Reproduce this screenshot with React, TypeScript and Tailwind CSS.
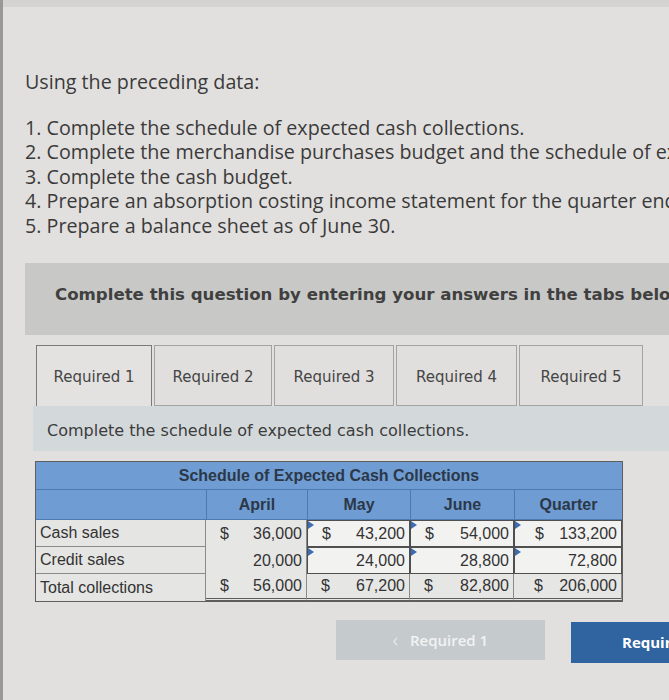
import React from "react";

type Amount = { sign: string; value: string; input?: boolean };

const rows: { label: string; total?: boolean; cells: Amount[] }[] = [
  {
    label: "Cash sales",
    cells: [
      { sign: "$", value: "36,000" },
      { sign: "$", value: "43,200", input: true },
      { sign: "$", value: "54,000", input: true },
      { sign: "$", value: "133,200", input: true },
    ],
  },
  {
    label: "Credit sales",
    cells: [
      { sign: "", value: "20,000" },
      { sign: "", value: "24,000", input: true },
      { sign: "", value: "28,800", input: true },
      { sign: "", value: "72,800", input: true },
    ],
  },
  {
    label: "Total collections",
    total: true,
    cells: [
      { sign: "$", value: "56,000" },
      { sign: "$", value: "67,200" },
      { sign: "$", value: "82,800" },
      { sign: "$", value: "206,000" },
    ],
  },
];

const colWidths = ["w-[101px]", "w-[103px]", "w-[104px]", "w-[108px]"];
const months = ["April", "May", "June", "Quarter"];

const tabs = [
  { name: "Required 1", w: "w-[116px]" },
  { name: "Required 2", w: "w-[118px]" },
  { name: "Required 3", w: "w-[120px]" },
  { name: "Required 4", w: "w-[121px]" },
  { name: "Required 5", w: "w-[124px]" },
];

function AmountCell({ cell, width, quarter, total }: { cell: Amount; width: string; quarter: boolean; total?: boolean }) {
  return (
    <div
      className={`relative box-border flex h-full ${width} items-center justify-between pr-[4px] ${
        quarter ? "pl-[20px]" : "pl-[14px]"
      } ${
        cell.input
          ? "border border-[#4f4f4f] bg-[#f2f2f1]"
          : "border-r border-[#8a8a8a] bg-[#e6e6e5]"
      } ${total ? "border-b-[3px] border-double border-b-[#5c5c5c]" : ""}`}
    >
      {cell.input && (
        <span className="absolute left-0 top-0 h-0 w-0 border-y-[4px] border-l-[6px] border-y-transparent border-l-[#3c6cb4]" />
      )}
      <span>{cell.sign}</span>
      <span>{cell.value}</span>
    </div>
  );
}

export default function App() {
  return (
    <div className="relative h-[700px] w-[669px] overflow-hidden border-l-[3px] border-[#9a9896] bg-[#e2e0de] text-[#363636]">
      <div className="h-[7px] bg-[#d5d3d1]" />
      <div className="w-[780px] pl-[22px]">
        {/* intro */}
        <div className="whitespace-nowrap font-['Open_Sans',sans-serif] text-[19.7px] text-[#3a3a3a]">
          <p className="mt-[63px] leading-[24px]">Using the preceding data:</p>
          <ol className="mt-[22px] leading-[24.4px]">
            <li>1. Complete the schedule of expected cash collections.</li>
            <li>2. Complete the merchandise purchases budget and the schedule of expected cash disbursements for merchandise purchases.</li>
            <li>3. Complete the cash budget.</li>
            <li>4. Prepare an absorption costing income statement for the quarter ended June 30.</li>
            <li>5. Prepare a balance sheet as of June 30.</li>
          </ol>
        </div>

        {/* banner */}
        <div className="mt-[25px] h-[72px] whitespace-nowrap bg-[#c8c8c7] pl-[30px] pt-[22px] font-['DejaVu_Sans',sans-serif] text-[16.6px] font-bold leading-[20px] text-[#404040]">
          Complete this question by entering your answers in the tabs below.
        </div>

        {/* tabs */}
        <div className="ml-[11px] mt-[10px] flex h-[61px] gap-[2px] font-['DejaVu_Sans',sans-serif] text-[15px] text-[#454545]">
          {tabs.map((t, i) => (
            <div
              key={t.name}
              className={`box-border flex h-full ${t.w} items-center justify-center pt-[3px] ${
                i === 0
                  ? "border-x border-t border-[#7a7a7a] bg-[#e3e2e0]"
                  : "border border-[#a3a3a2] bg-[#e0dfdd]"
              }`}
            >
              {t.name}
            </div>
          ))}
        </div>

        <div className="ml-[8px]">
          <div className="h-[45px] bg-[#d3d9db] pl-[14px] pt-[15px] font-['DejaVu_Sans',sans-serif] text-[16px] leading-[20px] text-[#3c3c3c]">
            Complete the schedule of expected cash collections.
          </div>

          {/* schedule */}
          <div className="ml-[2px] mt-[10px] box-border w-[588px] border border-[#5e5e5e] font-['Liberation_Sans',Arial,sans-serif] text-[16px] text-[#333]">
            <div className="flex h-[28px] items-center justify-center border-b border-[#4d7bb1] bg-[#6f9dd3] font-bold text-[#2c3848]">
              Schedule of Expected Cash Collections
            </div>
            <div className="flex h-[30px] bg-[#6f9dd3] font-bold text-[#2c3848]">
              <div className="w-[170px] border-b border-[#4d7bb1]" />
              {months.map((m, i) => (
                <div
                  key={m}
                  className={`box-border flex ${colWidths[i]} items-center justify-center border-b border-l border-[#4d7bb1]`}
                >
                  {m}
                </div>
              ))}
            </div>
            {rows.map((r) => (
              <div key={r.label} className="flex h-[27px]">
                <div
                  className={`box-border flex w-[170px] items-center border-r bg-[#e5e5e4] pl-[4px] ${
                    r.total ? "border-[#8a8a8a]" : "border-b border-[#8a8a8a]"
                  }`}
                >
                  {r.label}
                </div>
                {r.cells.map((c, i) => (
                  <AmountCell key={i} cell={c} width={colWidths[i]} quarter={i === 3} total={r.total} />
                ))}
              </div>
            ))}
          </div>
        </div>

        {/* navigation */}
        <div className="mt-[18px] flex items-start font-['Open_Sans',sans-serif] text-[15px] font-semibold">
          <div className="ml-[311px] flex h-[40px] w-[209px] items-center justify-center gap-[12px] bg-[#c5cacd] text-[#f1f3f4]">
            <span className="text-[20px] font-light leading-none">&lsaquo;</span>
            <span>Required 1</span>
          </div>
          <div className="ml-[26px] mt-[2px] flex h-[41px] w-[140px] items-center bg-[#2f64a1] pl-[51px] font-bold text-white">
            Required 2
          </div>
        </div>
      </div>
    </div>
  );
}
